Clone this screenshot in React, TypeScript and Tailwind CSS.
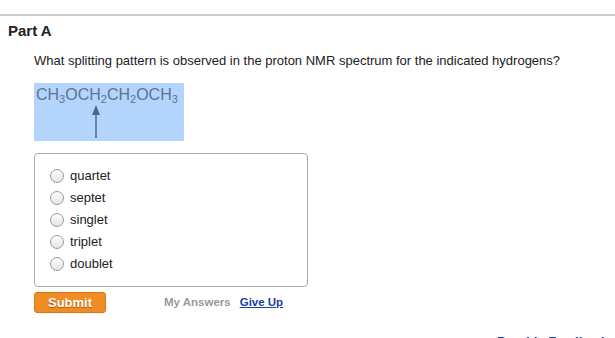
const options = ['quartet', 'septet', 'singlet', 'triplet', 'doublet']

export default function App() {
  return (
    <div className="h-[338px] w-[615px] overflow-hidden bg-white font-['Liberation_Sans',Arial,sans-serif] text-[#222]">
      <div className="h-[14px]" />
      <div className="h-[2px] bg-[#cccccc]" />
      <h2 className="ml-[8px] mt-[7px] text-[15px] font-bold leading-[16px] text-[#222]">Part A</h2>
      <div className="ml-[34px]">
        <p className="mt-[14px] text-[13px] leading-[15px]">
          What splitting pattern is observed in the proton NMR spectrum for the indicated hydrogens?
        </p>
        <div className="mt-[15px] flex h-[58px] w-[150px] flex-col bg-[#b3d4fc] pl-[2px] pt-[3px]">
          <span className="text-[16px] leading-[18px] text-[#5c7590]">
            CH<sub className="text-[11px]">3</sub>OCH<sub className="text-[11px]">2</sub>CH<sub className="text-[11px]">2</sub>OCH<sub className="text-[11px]">3</sub>
          </span>
          <svg width="20" height="34" viewBox="0 0 20 34" className="ml-[50px] mt-[1px]">
            <line x1="10" y1="6" x2="10" y2="33" stroke="#6a86a3" strokeWidth="2" />
            <polygon points="10,0 6,10 14,10" fill="#4e6783" />
          </svg>
        </div>
        <div className="mt-[12px] flex h-[134px] w-[274px] flex-col gap-[8px] rounded-[4px] border border-[#aaaaaa] pl-[15px] pt-[15px]">
          {options.map((o) => (
            <label key={o} className="flex h-[14px] items-center gap-[6px] text-[13px] leading-[14px]">
              <span className="h-[14px] w-[14px] rounded-full border border-[#9a9a9a] bg-gradient-to-b from-white to-[#e4e4e4]" />
              {o}
            </label>
          ))}
        </div>
        <div className="mt-[5px] flex items-center">
          <button className="h-[21px] w-[72px] rounded-[3px] border border-[#d8781a] bg-[#ef8c23] text-[13px] font-bold text-white [text-shadow:0_1px_1px_rgba(120,60,0,0.6)]">
            Submit
          </button>
          <span className="ml-[58px] text-[11.5px] font-bold text-[#999]">My Answers</span>
          <span className="ml-[9px] text-[11.5px] font-bold text-[#1a3ea5] underline">Give Up</span>
        </div>
      </div>
      <div className="ml-[497px] mt-[19px] text-[13px] font-bold text-[#1a3ea5]">Provide Feedback</div>
    </div>
  )
}
